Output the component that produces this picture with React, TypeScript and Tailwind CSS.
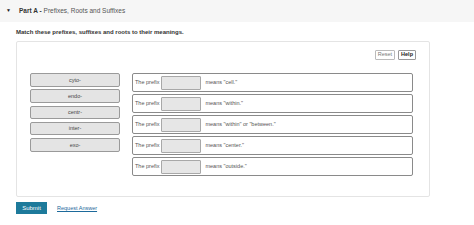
import React from "react";

const prefixes = ["cyto-", "endo-", "centr-", "inter-", "exo-"];
const meanings = [
  'means "cell."',
  'means "within."',
  'means "within" or "between."',
  'means "center."',
  'means "outside."',
];

export default function App() {
  return (
    <div
      className="w-[474px] h-[225px] bg-white overflow-hidden"
      style={{ fontFamily: '"Liberation Sans", Arial, sans-serif' }}
    >
      {/* Part header */}
      <div className="h-[22px] bg-[#f6f6f6] flex items-center pl-[6px] text-[6.5px] text-[#333]">
        <span className="text-[5px] mr-[8px] text-[#222]">▼</span>
        <span className="font-bold">Part A -</span>
        <span className="ml-[2px] text-[#555]">Prefixes, Roots and Suffixes</span>
      </div>

      <div className="pl-[16px]">
        <p className="mt-[6px] text-[6px] font-bold text-[#333] leading-[8px]">
          Match these prefixes, suffixes and roots to their meanings.
        </p>

        {/* Activity box */}
        <div className="mt-[5px] w-[414px] h-[156px] border border-[#e4e4e4] rounded-[2px] px-[13px] pt-[8px]">
          <div className="flex justify-end gap-[3px]">
            <button className="h-[10px] px-[2px] border border-[#bbb] rounded-[1px] text-[5.5px] text-[#777] leading-none bg-white">
              Reset
            </button>
            <button className="h-[10px] px-[2px] border border-[#999] rounded-[1px] text-[5.5px] font-bold text-[#222] leading-none bg-white">
              Help
            </button>
          </div>

          <div className="mt-[13px] flex">
            {/* Draggable labels */}
            <div className="w-[90px] flex flex-col gap-[2.75px]">
              {prefixes.map((p) => (
                <div
                  key={p}
                  className="h-[13.5px] bg-[#e4e4e4] border border-[#9a9a9a] rounded-[2px] flex items-center justify-center text-[5.5px] text-[#444]"
                >
                  {p}
                </div>
              ))}
            </div>

            {/* Targets */}
            <div className="ml-[12px] w-[281px] flex flex-col gap-[2px]">
              {meanings.map((m) => (
                <div
                  key={m}
                  className="h-[19px] border border-[#8a8a8a] rounded-[2px] flex items-center pl-[2px] text-[5.5px] text-[#555]"
                >
                  <span>The prefix</span>
                  <span className="ml-[2px] w-[40px] h-[14px] bg-[#e6e6e6] border border-[#a8a8a8] rounded-[1px]" />
                  <span className="ml-[4px]">{m}</span>
                </div>
              ))}
            </div>
          </div>
        </div>

        {/* Footer actions */}
        <div className="mt-[5px] flex items-center">
          <button className="w-[31px] h-[12px] bg-[#1d7a9b] text-white text-[6px] leading-none">
            Submit
          </button>
          <a className="ml-[10px] text-[5.5px] text-[#1d6a9b] underline">Request Answer</a>
        </div>
      </div>
    </div>
  );
}
